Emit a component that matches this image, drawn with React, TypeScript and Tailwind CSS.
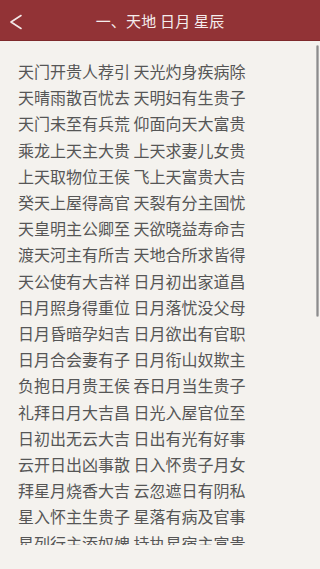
import React from "react";

const lines: [string, string][] = [
  ["天门开贵人荐引", "天光灼身疾病除"],
  ["天晴雨散百忧去", "天明妇有生贵子"],
  ["天门未至有兵荒", "仰面向天大富贵"],
  ["乘龙上天主大贵", "上天求妻儿女贵"],
  ["上天取物位王侯", "飞上天富贵大吉"],
  ["癸天上屋得高官", "天裂有分主国忧"],
  ["天皇明主公卿至", "天欲晓益寿命吉"],
  ["渡天河主有所吉", "天地合所求皆得"],
  ["天公使有大吉祥", "日月初出家道昌"],
  ["日月照身得重位", "日月落忧没父母"],
  ["日月昏暗孕妇吉", "日月欲出有官职"],
  ["日月合会妻有子", "日月衔山奴欺主"],
  ["负抱日月贵王侯", "吞日月当生贵子"],
  ["礼拜日月大吉昌", "日光入屋官位至"],
  ["日初出无云大吉", "日出有光有好事"],
  ["云开日出凶事散", "日入怀贵子月女"],
  ["拜星月烧香大吉", "云忽遮日有阴私"],
  ["星入怀主生贵子", "星落有病及官事"],
  ["星列行主添奴婢", "持执星宿主富贵"],
];

export default function App() {
  return (
    <div
      className="w-[320px] h-[569px] bg-[#f4f2ee] overflow-hidden flex flex-col relative"
      style={{ fontFamily: '"Noto Sans CJK SC", "Noto Sans", sans-serif' }}
    >
      <header className="h-[41px] shrink-0 bg-[#923336] flex items-center relative border-b border-[#7e2a2c]">
        <button className="absolute left-[8px] top-[13px] w-[16px] h-[18px] flex items-center justify-center">
          <svg width="14" height="16" viewBox="0 0 14 16" fill="none">
            <polyline
              points="12,1.5 2,8 12,14.5"
              stroke="#f3e8e8"
              strokeWidth="1.6"
              strokeLinecap="round"
              strokeLinejoin="round"
            />
          </svg>
        </button>
        <h1 className="flex-1 text-center text-[15px] text-[#f5eded] leading-none pt-[1px] tracking-[0.2px]">
          一、天地 日月 星辰
        </h1>
      </header>
      <div className="h-[504px] shrink-0 overflow-hidden pl-[18px] pt-[17px] relative">
        {lines.map(([a, b], i) => (
          <div
            key={i}
            className="text-[16px] leading-[26.2px] text-[#565656] whitespace-nowrap"
          >
            {a} {b}
          </div>
        ))}
      </div>
      <div className="absolute right-[1px] top-[45px] w-[3px] h-[272px] rounded-full bg-[#8c8c8c] border border-[#b0b0b0]" />
    </div>
  );
}
